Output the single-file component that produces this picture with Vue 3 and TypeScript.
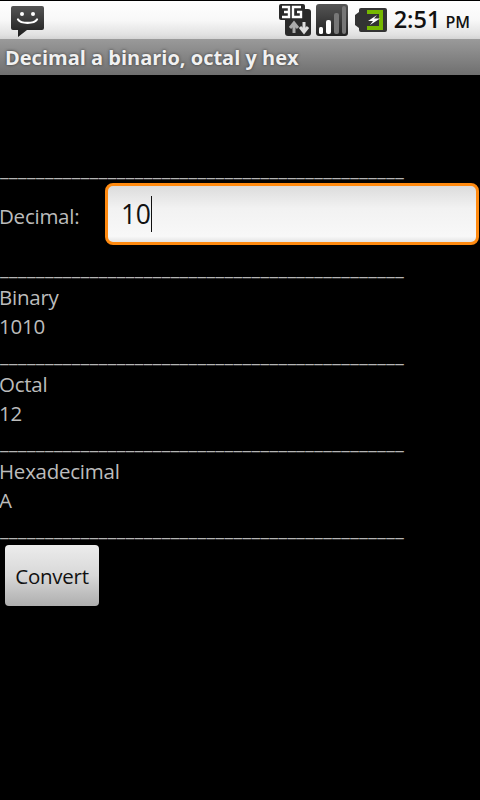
<script setup lang="ts">
const rule = '_'.repeat(45)
const results = [
  { label: 'Binary', value: '1010' },
  { label: 'Octal', value: '12' },
  { label: 'Hexadecimal', value: 'A' },
]
</script>

<template>
  <div class="screen">
    <header class="status">
      <svg class="notify" width="34" height="32" viewBox="0 0 34 32">
        <defs>
          <linearGradient id="bub" x1="0" y1="0" x2="0" y2="1">
            <stop offset="0" stop-color="#555" />
            <stop offset="1" stop-color="#1c1c1c" />
          </linearGradient>
          <linearGradient id="sig" x1="0" y1="0" x2="0" y2="1">
            <stop offset="0" stop-color="#555" />
            <stop offset="1" stop-color="#222" />
          </linearGradient>
        </defs>
        <path d="M2 0H31a2 2 0 0 1 2 2V22a2 2 0 0 1-2 2H16L7 31V24H2a2 2 0 0 1-2-2V2a2 2 0 0 1 2-2Z" fill="url(#bub)" />
        <circle cx="11" cy="8" r="2" fill="#fff" />
        <circle cx="22" cy="8" r="2" fill="#fff" />
        <path d="M7 13.5C10 18 23 18 26 13.5" fill="none" stroke="#fff" stroke-width="2.2" stroke-linecap="round" />
      </svg>
      <div class="tray">
        <svg class="net" width="32" height="32" viewBox="0 0 32 32">
          <rect x="6" y="5" width="26" height="27" rx="3" fill="#2a2a2a" />
          <rect x="0" y="0" width="26" height="16" rx="2" fill="#2a2a2a" />
          <path d="M3 3H10V13H3M5 8H10" fill="none" stroke="#fff" stroke-width="2.4" />
          <path d="M22 3H14V13H22V8H18" fill="none" stroke="#fff" stroke-width="2.4" />
          <path d="M15 29V21M11 24L15 19L19 24" fill="none" stroke="#aaa" stroke-width="3" />
          <path d="M25 18V26M21 23L25 28L29 23" fill="none" stroke="#ddd" stroke-width="3" />
        </svg>
        <svg class="signal" width="32" height="32" viewBox="0 0 32 32">
          <rect width="32" height="32" rx="3" fill="url(#sig)" />
          <rect x="3" y="23" width="4" height="7" rx="1.500" fill="#fff" />
          <rect x="10" y="16" width="5" height="14" rx="2" fill="#fff" />
          <rect x="18" y="9" width="5" height="21" rx="2" fill="#777" />
          <rect x="26" y="2" width="4" height="28" rx="2" fill="#777" />
        </svg>
        <svg class="battery" width="32" height="24" viewBox="0 0 32 24">
          <path d="M0 7L4 4V2a2 2 0 0 1 2-2H30a2 2 0 0 1 2 2V22a2 2 0 0 1-2 2H6a2 2 0 0 1-2-2V20L0 17Z" fill="#333" />
          <path d="M12 2H28V22H12V18H24V6H12Z" fill="#76b800" />
          <path d="M22 7L13 13H18L15 17L25 10.500H19L22 7Z" fill="#fff" />
        </svg>
        <div class="clock"><span>2:51</span><small>PM</small></div>
      </div>
    </header>

    <h1 class="title">Decimal a binario, octal y hex</h1>

    <main class="content">
      <div class="rule">{{ rule }}</div>
      <div class="decimal-row">
        <label class="text" for="decimal">Decimal:</label>
        <div id="decimal" class="input">10<span class="caret"></span></div>
      </div>
      <div class="rule">{{ rule }}</div>
      <section v-for="item in results" :key="item.label">
        <div class="text">{{ item.label }}</div>
        <div class="text">{{ item.value }}</div>
        <div class="rule">{{ rule }}</div>
      </section>
      <button class="convert" type="button">Convert</button>
    </main>
  </div>
</template>

<style scoped>
.screen {
  width: 480px;
  height: 800px;
  overflow: hidden;
  background: #000;
  font-family: "Open Sans", "Noto Sans", sans-serif;
}
.status {
  box-sizing: border-box;
  height: 39px;
  display: flex;
  justify-content: space-between;
  align-items: flex-start;
  border-top: 1px solid #000;
  background: linear-gradient(#fff 0, #f8f8f8 50%, #e2e2e2 88%, #d4d4d4 100%);
}
.notify {
  margin: 5px 0 0 11px;
}
.tray {
  display: flex;
  align-items: center;
  height: 32px;
  margin-top: 3px;
  padding-right: 10px;
}
.net {
  margin-right: 5px;
}
.signal {
  margin-right: 7px;
}
.battery {
  margin-right: 7px;
}
.clock {
  display: flex;
  align-items: baseline;
  gap: 5px;
  font-size: 23.500px;
  font-weight: 600;
  color: #111;
  line-height: 32px;
}
.clock small {
  font-size: 16px;
}
.title {
  box-sizing: border-box;
  height: 36px;
  margin: 0;
  padding-left: 5px;
  background: linear-gradient(#9a9a9a, #6f6f6f);
  color: #f1f1f1;
  font-size: 20px;
  font-weight: 700;
  line-height: 37px;
  white-space: nowrap;
  text-shadow: 0 0 3px #333;
}
.content {
  padding-top: 81px;
  color: #bcbcbc;
}
.rule,
.text {
  height: 29px;
  white-space: nowrap;
}
.text {
  font-size: 20.500px;
  letter-spacing: -0.25px;
  line-height: 27px;
  margin-left: -1px;
}
.rule {
  font-size: 19.500px;
  letter-spacing: 0.44px;
  line-height: 25px;
  color: #b4b4b4;
}
.decimal-row {
  height: 70px;
  display: flex;
  align-items: flex-start;
}
.decimal-row .text {
  width: 106px;
  margin-top: 18px;
  flex: none;
}
.input {
  box-sizing: border-box;
  width: 374px;
  height: 62px;
  margin-top: -2px;
  padding-left: 13px;
  display: flex;
  align-items: center;
  border: 3px solid #ff8a10;
  border-radius: 8px;
  background: linear-gradient(#dcdcdc, #f2f2f2 40%, #f8f8f8 90%, #e4e4e4);
  color: #111;
  font-size: 26.500px;
  letter-spacing: -0.4px;
}
.caret {
  width: 1px;
  height: 36px;
  background: #111;
}
.convert {
  display: block;
  width: 94px;
  height: 61px;
  margin-left: 5px;
  padding: 0;
  border: 0;
  border-radius: 4px;
  background: linear-gradient(#ececec, #d8d8d8 50%, #aeaeae);
  color: #111;
  font-family: inherit;
  font-size: 20.500px;
  letter-spacing: -0.25px;
}
</style>

<style>
body {
  background: #000;
}
</style>
